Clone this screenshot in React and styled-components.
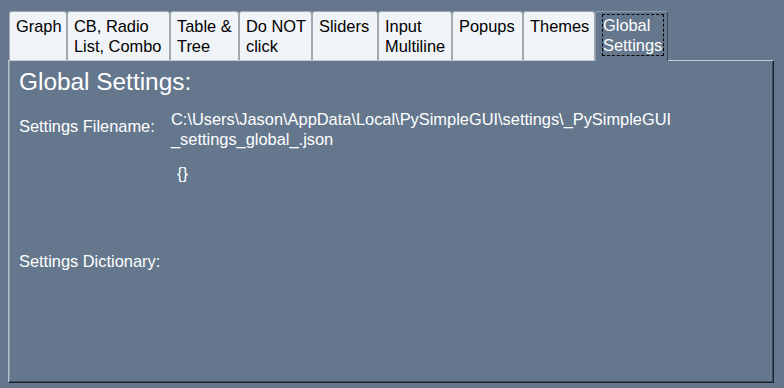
import React from "react";
import styled, { createGlobalStyle } from "styled-components";

const Global = createGlobalStyle`
  html, body { margin: 0; padding: 0; background: #64778d; }
  body { font-family: "Liberation Sans", Arial, sans-serif; }
`;

const Window = styled.div`
  width: 784px;
  height: 388px;
  box-sizing: border-box;
  padding: 11px 10px 0 8px;
  background: #64778d;
`;

const TabBar = styled.div`
  display: flex;
  align-items: flex-end;
  padding-left: 1px;
  height: 49px;
  position: relative;
  z-index: 1;
`;

const Tab = styled.div`
  box-sizing: border-box;
  width: ${(p) => p.$w}px;
  height: ${(p) => (p.$active ? 50 : 49)}px;
  margin-bottom: ${(p) => (p.$active ? -1 : 0)}px;
  padding: ${(p) => (p.$active ? "2px 0 0 6px" : "4px 0 0 6px")};
  border: 1px solid ${(p) => (p.$active ? "#8e9cad" : "#a3a9b1")};
  border-bottom: none;
  border-right-color: ${(p) => (p.$active ? "#3d4957" : "#a3a9b1")};
  border-radius: 3px 3px 0 0;
  background: ${(p) => (p.$active ? "#64778d" : "#f0f3f7")};
  color: ${(p) => (p.$active ? "#ffffff" : "#000000")};
  font-size: 16.4px;
  line-height: 20px;
  white-space: pre-line;
`;

const Focus = styled.span`
  display: inline-block;
  border: 1px dashed #000;
  padding: 0 1px 0 0;
`;

const Panel = styled.div`
  box-sizing: border-box;
  height: 323px;
  border-top: 1px solid #c3cbd5;
  border-left: 1px solid #b6c0cb;
  border-right: 1px solid #1b222b;
  border-bottom: 1px solid #1b222b;
  box-shadow: inset -1px -1px 0 #3f4c5a, inset 1px 0 0 #8a99aa;
  padding: 7px 10px 0 10px;
  color: #ffffff;
`;

const Title = styled.div`
  font-size: 24.4px;
  line-height: 28px;
`;

const Row = styled.div`
  display: grid;
  grid-template-columns: 152px 1fr;
  align-items: ${(p) => p.$align || "start"};
  margin-top: ${(p) => p.$gap}px;
  font-size: 16.4px;
  line-height: 20px;
`;

const Label = styled.div`
  padding-top: ${(p) => p.$offset || 0}px;
`;

const Value = styled.div`
  white-space: pre-line;
`;

const DictBox = styled.div`
  height: 196px;
  padding-left: 6px;
`;

const tabs = [
  { label: "Graph", w: 58 },
  { label: "CB, Radio\nList, Combo", w: 103 },
  { label: "Table &\nTree", w: 69 },
  { label: "Do NOT\nclick", w: 73 },
  { label: "Sliders", w: 66 },
  { label: "Input\nMultiline", w: 74 },
  { label: "Popups", w: 71 },
  { label: "Themes", w: 72 },
  { label: "Global\nSettings", w: 73, active: true },
];

export default function App() {
  return (
    <>
      <Global />
      <Window>
        <TabBar>
          {tabs.map((t) => (
            <Tab key={t.label} $w={t.w} $active={t.active}>
              {t.active ? <Focus>{t.label}</Focus> : t.label}
            </Tab>
          ))}
        </TabBar>
        <Panel>
          <Title>Global Settings:</Title>
          <Row $gap={13}>
            <Label $offset={7}>Settings Filename:</Label>
            <Value>
              {"C:\\Users\\Jason\\AppData\\Local\\PySimpleGUI\\settings\\_PySimpleGUI\n_settings_global_.json"}
            </Value>
          </Row>
          <Row $gap={14} $align="center">
            <Label>Settings Dictionary:</Label>
            <DictBox>{"{}"}</DictBox>
          </Row>
        </Panel>
      </Window>
    </>
  );
}
